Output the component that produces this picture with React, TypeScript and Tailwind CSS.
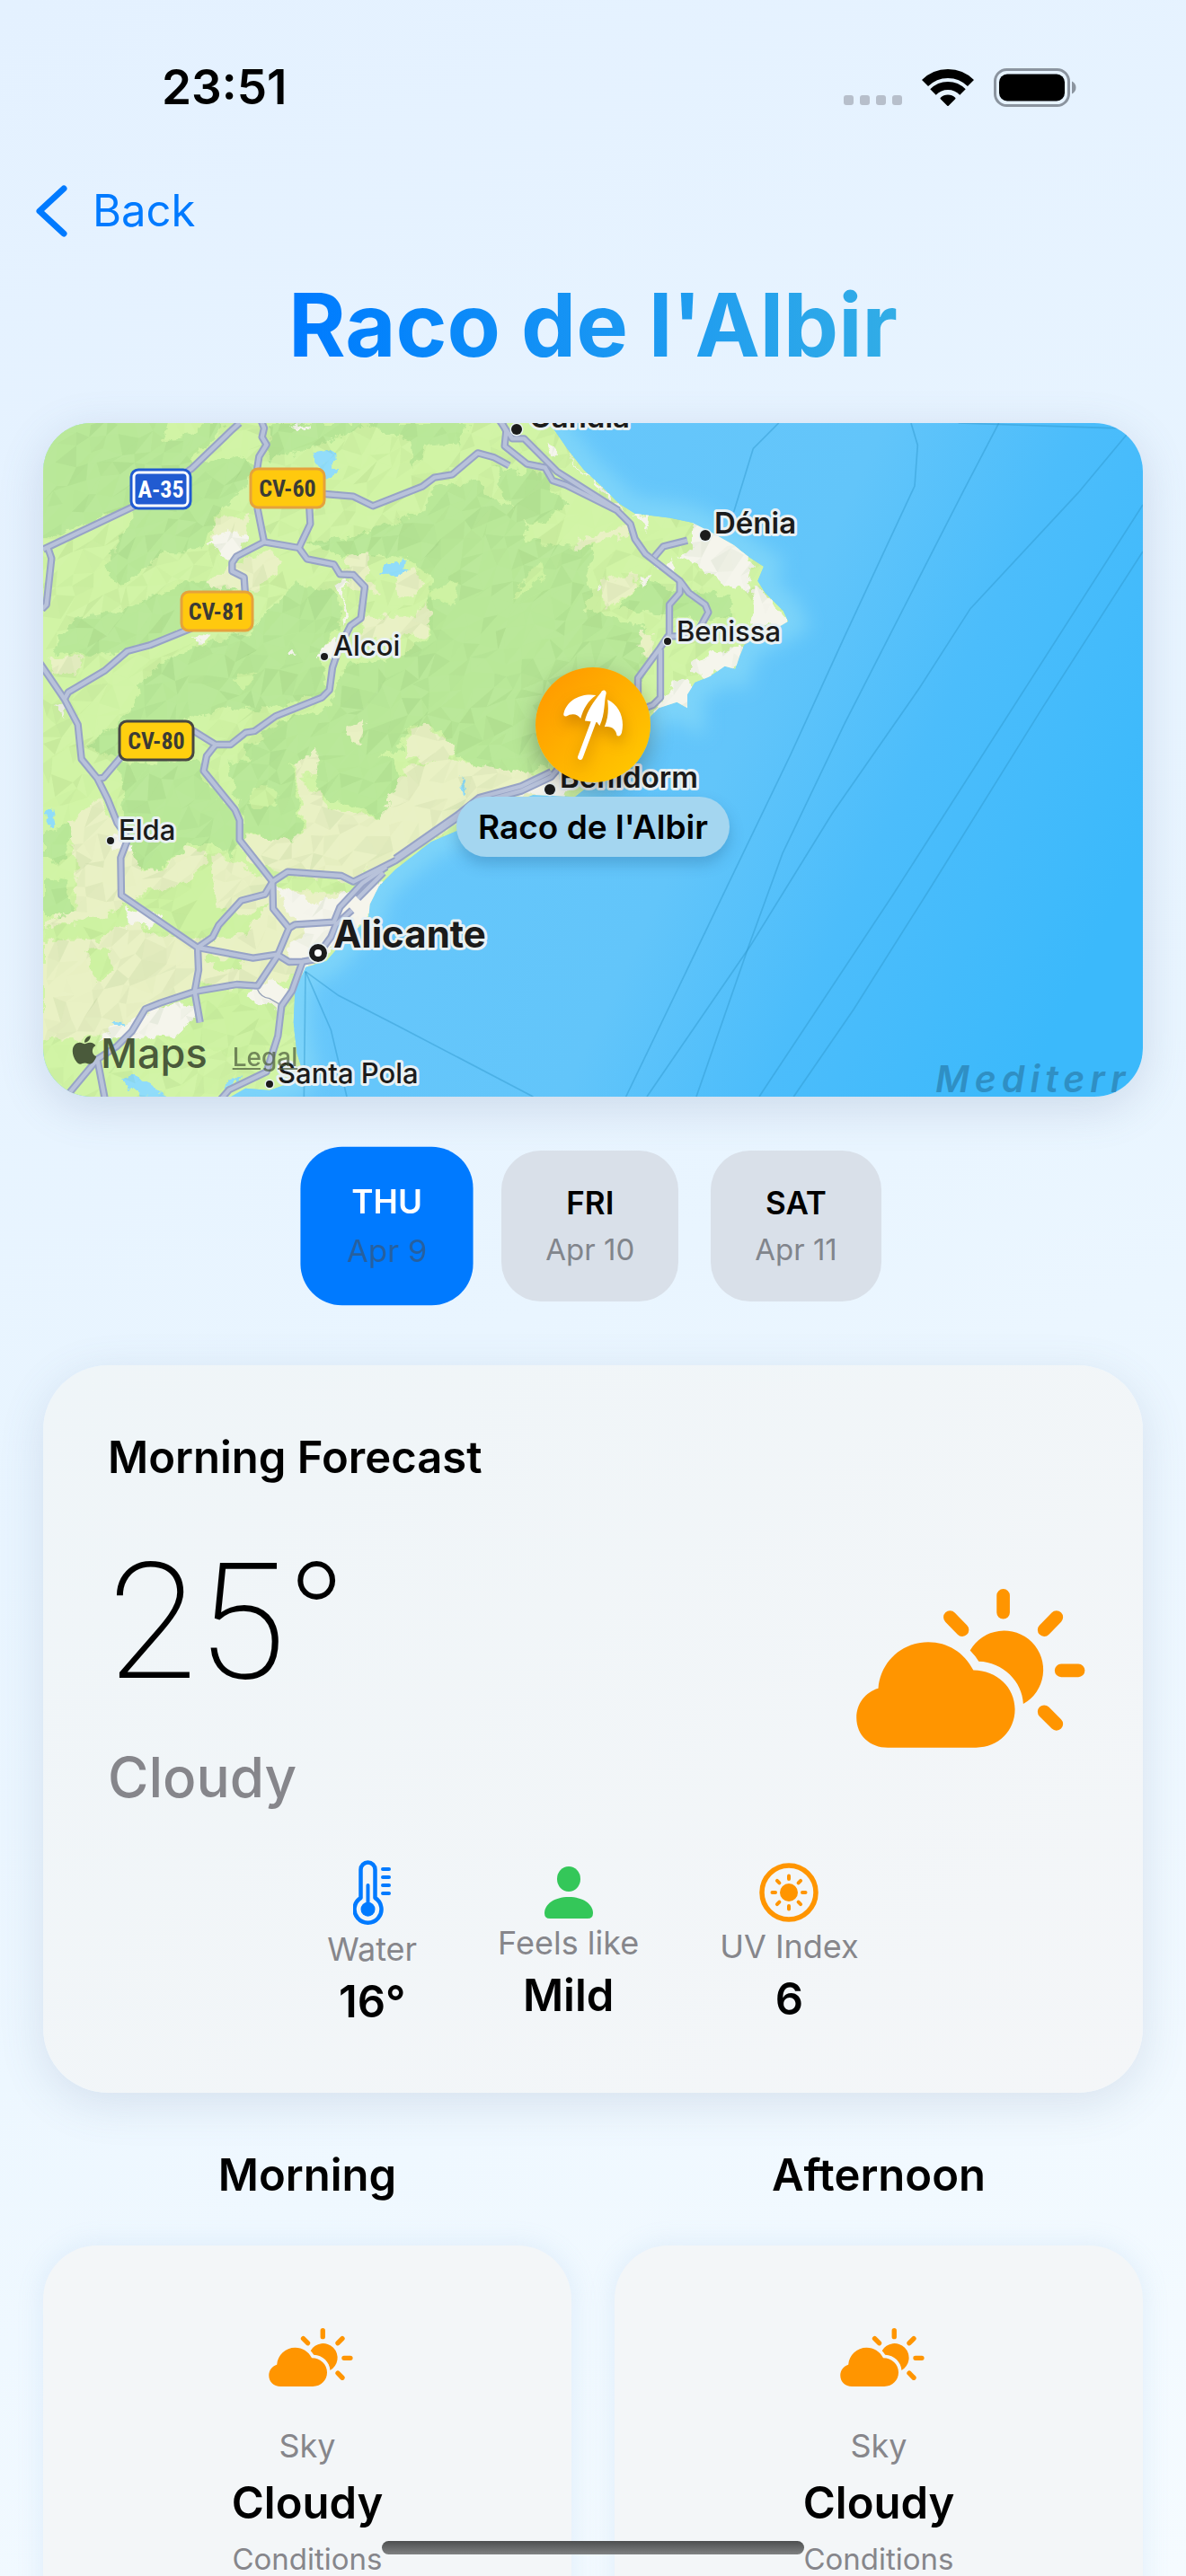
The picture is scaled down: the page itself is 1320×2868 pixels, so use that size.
import { useState } from "react";
import { FaApple } from "react-icons/fa";

const roads = [
  "24,455 330,310 520,185 650,60 680,33",
  "40,450 52,485 35,640 20,655",
  "750,20 762,50 755,80 770,105 745,145 738,190 740,320 762,430",
  "900,268 965,270 1060,278 1125,310 1290,245 1330,215 1390,205 1475,133 1530,148 1580,175",
  "912,300 916,370 878,450",
  "762,430 878,450 905,487 995,505 1015,538 1060,540 1098,580 1085,685 1050,710 1010,790 990,850 980,925 955,950 800,1012 730,1062 700,1067 650,1107 600,1107 500,1045",
  "762,430 670,478 655,500 655,528 695,548 700,620",
  "520,718 380,775 305,795 230,860 108,932 95,955",
  "10,830 95,955 140,1040 152,1155 205,1220 240,1290 272,1370 308,1420 283,1485 285,1610 540,1785",
  "300,1130 225,1218 205,1220",
  "600,1107 570,1145 560,1195 665,1325 680,1360 680,1425 790,1565",
  "790,1565 840,1532 1020,1545 1060,1565 1150,1520 1200,1495 1410,1350 1480,1300 1620,1262 1720,1215 1750,1180",
  "1200,1487 1410,1340 1480,1284 1620,1246 1720,1198",
  "790,1565 765,1607 685,1628 610,1710 590,1750 540,1785",
  "540,1785 725,1820 805,1808 845,1833 890,1832 930,1825 985,1750 1005,1700",
  "790,1565 792,1655 845,1720 805,1815 740,1913 670,1908 530,1932 415,1970 365,1990 320,2065 270,2115 205,2158 95,2290",
  "845,1720 865,1708 995,1700 1015,1650 1090,1570 1170,1515",
  "1075,1620 1160,1535",
  "1055,1660 1000,1710",
  "540,1785 543,1860 530,1932 548,2035",
  "205,2158 232,2300",
  "890,1832 855,1930 820,1980 808,2080 770,2200 645,2260 610,2300",
  "1550,20 1570,60 1565,110 1640,170 1700,182 1725,225 1770,240 1940,325 1985,370 2000,420 2035,470 2150,560 2180,600 2235,640 2245,665 2215,720 2180,745 2110,745 2080,790 2010,885 2010,960",
  "1545,20 1590,85 1630,85 1740,195 1945,325",
  "2175,425 2095,445 2065,480",
  "2150,560 2150,600 2115,640 2115,740",
  "2085,790 2085,950 2060,975 1980,1005",
];

const forests = [
  "0,0 450,0 420,100 470,90 560,33 640,33 500,180 330,300 120,390 0,440",
  "560,160 690,140 730,180 700,240 640,310 600,340 575,400 560,460 440,460 380,500 280,570 230,520 290,400 330,330 430,290",
  "130,690 340,640 520,560 680,560 640,620 500,720 320,790 180,810 60,800 80,740",
  "780,33 1100,33 960,100 780,160",
  "1100,33 1440,33 1420,100 1300,110 1260,190 1250,90",
  "860,570 1000,590 1020,700 940,800 980,930 780,990 640,980 500,1020 420,1080 240,1150 180,1110 330,980 350,900 400,850 560,770 700,740",
  "900,430 1060,410 1300,330 1330,240 1480,230 1500,270 1620,340 1640,420 1790,450 1860,440 1840,540 1850,620 1830,650 2040,720 2060,800 2020,900 1960,1160 1780,1120 1700,1180 1560,1230 1500,1190 1390,1140 1360,1060 1250,1040 1220,1120 1000,1190 880,1170 720,1160 700,1120 820,1030 980,985 1010,900 1040,830 1180,830 1320,740 1300,640 1330,560 1240,480 1000,470",
  "1540,190 1700,200 1720,260 1780,300 1700,360 1640,370 1560,290",
  "1940,650 2040,550 2110,590 2230,600 2320,610 2330,680 2200,690",
  "270,1170 540,1160 560,1220 660,1330 700,1410 660,1480 580,1440 510,1440 410,1530 340,1520 280,1400 300,1280",
  "640,1160 850,1160 870,1280 890,1400 850,1440 690,1400 680,1330",
  "930,1140 1190,1150 1230,1250 1150,1350 1060,1310 940,1270",
  "1230,1260 1330,1270 1330,1380 1280,1350",
  "1340,1180 1600,1160 1600,1190 1420,1220",
  "1255,1280 1390,1260 1400,1340 1330,1390 1260,1330",
  "24,1400 130,1370 80,1510 24,1480",
  "24,1545 90,1560 130,1680 24,1680",
  "30,1990 180,1920 180,2050 24,2055",
];

const drylands = [
  "580,380 610,345 715,350 700,410 600,420",
  "660,500 780,460 830,500 740,590 600,590 570,560",
  "1030,480 1110,465 1110,560 1150,600 1050,580",
  "1200,530 1260,520 1290,560 1260,620 1210,600",
  "1100,680 1260,680 1290,640 1320,660 1310,740 1140,760 1060,790",
  "40,815 160,815 130,870 60,870",
  "1820,420 1980,375 1990,400 1880,430 1800,450",
  "1890,560 2000,535 2000,590 1900,650",
  "2020,730 2070,730 2050,820 2010,790",
  "1040,1050 1110,1010 1080,1110 1050,1100",
  "860,1170 940,1130 940,1200 880,1210 1000,1330 1150,1350 1240,1180 1400,1160 1700,1210 1700,1280 1400,1380 1180,1500 1050,1560 840,1540 700,1500 690,1410 850,1430 900,1400",
  "110,1370 200,1290 290,1390 350,1530 430,1520 500,1450 650,1490 780,1560 880,1600 1050,1600 1060,1720 900,1870 780,1900 640,1920 500,1960 360,2000 300,2070 24,2100 24,1700 130,1660 140,1560",
  "1250,1060 1290,1040 1400,1110 1380,1180 1230,1150",
];

const meadows = [
  "360,1600 520,1560 580,1450 600,1640 700,1680 780,1640 700,1740 560,1760 420,1740 300,1700 200,1760 24,1760 24,1720 240,1680",
  "560,1820 700,1830 650,1860 600,1850",
  "710,1280 750,1240 810,1260 800,1310 720,1320",
  "420,1980 560,1900 840,1990 870,2060 700,2160 400,2090",
  "970,1570 1080,1560 1060,1610 1000,1600",
  "1590,620 1680,490 1690,550 1590,620",
  "650,880 740,860 700,920",
  "1310,600 1420,560 1400,640 1320,620",
  "200,1900 260,1860 240,1780 160,1800",
];

const towns = [
  "580,430 640,395 700,410 680,470 640,500 620,460",
  "850,42 920,38 880,55",
  "1010,570 1050,560 1020,620 1050,680 1030,710",
  "960,770 1000,750 1000,810 930,810",
  "840,800 860,780 870,800 850,812",
  "520,735 580,745 560,765",
  "60,975 110,965 100,1010",
  "300,1650 430,1680 380,1715 310,1710",
  "810,1570 860,1600 920,1640 1050,1600 1150,1560 1110,1690 1000,1780 880,1860 840,1800 900,1720 830,1660",
  "360,2000 500,1960 550,2010 460,2080 320,2090 200,2090",
  "700,1950 770,1890 850,1930 810,2000",
  "240,1430 300,1400 320,1460 260,1460",
  "2000,335 2050,340 2040,400",
  "2190,360 2350,440 2400,500 2380,590 2300,570 2150,480 2190,440",
  "2070,520 2130,480 2150,540",
  "2380,700 2400,570 2460,640 2510,700 2400,720",
  "2190,830 2330,780 2370,780 2340,850 2240,890 2190,860",
  "2130,910 2180,880 2200,920 2170,990 2060,1000",
  "1710,100 1750,125 1720,140",
  "1760,130 1960,320 1940,320",
  "1600,1270 1700,1210 1800,1240 1760,1290",
  "2005,550 2060,540 2020,590",
  "1870,570 1890,570 1880,595",
];

const ferries = [
  "2922,33 2944,107 2934,243 2700,746 2520,1140 1970,2283",
  "3215,33 3100,254 2700,1037 2493,1470 2380,1780 2205,2283",
  "3080,33 3590,50 3660,50 3480,266 3120,653 2950,918 2660,1335 2385,1780 2040,2283",
  "3696,306 2860,1611 2460,2215 2415,2283",
  "3696,462 3360,985 2980,1596 2730,1992 2530,2283",
  "2480,33 2395,118 2330,330",
  "900,1865 895,2283",
  "900,1865 985,2060 1038,2283",
  "900,1865 1010,1945 1200,2042 1660,2283",
];

const coast =
  "M0,0 H1700 L1715,33 1775,120 1830,190 1890,245 1945,300 2000,335 2120,350 2190,365 2250,395 2330,440 2380,480 2430,512 2410,560 2435,600 2470,635 2495,660 2512,695 2470,720 2400,750 2365,775 2350,810 2335,855 2300,845 2250,880 2200,900 2175,940 2175,985 2140,965 2080,985 2055,1010 2000,1080 1940,1170 1840,1250 1800,1282 1660,1275 1560,1310 1430,1385 1320,1432 1200,1525 1145,1580 1115,1640 1110,1690 1040,1750 970,1830 900,1850 865,1930 860,2040 872,2140 885,2180 870,2230 780,2262 700,2255 640,2290 V2400 H0 Z";

// low-poly hillshade: a jittered grid split into triangles of varying tone
const noise = (a: number, b: number) => {
  const n = Math.sin(a * 127.1 + b * 311.7) * 43758.5453;
  return n - Math.floor(n);
};

const CELL = 50;
const COLS = 51;
const ROWS = 47;

const vertex = (col: number, row: number) =>
  `${Math.round((col + noise(col, row) * 0.9) * CELL)},${Math.round((row + noise(row + 50, col) * 0.9) * CELL)}`;

const facets = Array.from({ length: COLS * ROWS }, (_, i) => {
  const col = i % COLS;
  const row = Math.floor(i / COLS);
  return [
    { points: `${vertex(col, row)} ${vertex(col + 1, row)} ${vertex(col, row + 1)}`, tone: noise(col + 9, row + 3) },
    { points: `${vertex(col + 1, row)} ${vertex(col + 1, row + 1)} ${vertex(col, row + 1)}`, tone: noise(col + 31, row + 77) },
  ];
}).flat();

interface CityProps {
  name: string;
  x: number;
  y: number;
  dot: [number, number, number];
  className: string;
}

const cities: CityProps[] = [
  { name: "Gandia", x: 549, y: 16, dot: [535, 18, 6], className: "text-[33px] font-semibold" },
  { name: "Dénia", x: 755, y: 134, dot: [745, 136, 6], className: "text-[33px] font-semibold" },
  { name: "Benissa", x: 713, y: 254, dot: [703, 254, 4], className: "text-[31px] font-medium" },
  { name: "Alcoi", x: 331, y: 270, dot: [321, 271, 4], className: "text-[31px] font-medium" },
  { name: "Benidorm", x: 583, y: 417, dot: [572, 419, 6], className: "text-[33px] font-semibold" },
  { name: "Elda", x: 92, y: 475, dot: [83, 476, 4], className: "text-[31px] font-medium" },
  { name: "Santa Pola", x: 269, y: 746, dot: [260, 747, 4], className: "text-[31px] font-medium" },
];

interface ShieldProps {
  name: string;
  x: number;
  y: number;
  width: number;
  fill: string;
  stroke: string;
  color: string;
}

const shields: ShieldProps[] = [
  { name: "A-35", x: 106, y: 63, width: 66, fill: "#215bd1", stroke: "#215bd1", color: "#ffffff" },
  { name: "CV-60", x: 239, y: 62, width: 82, fill: "#ffc90e", stroke: "#e5a23c", color: "#3b3b35" },
  { name: "CV-81", x: 162, y: 199, width: 79, fill: "#ffc90e", stroke: "#e5a23c", color: "#3b3b35" },
  { name: "CV-80", x: 93, y: 343, width: 82, fill: "#ffcf0f", stroke: "#474742", color: "#3b3b35" },
];

const Areas = ({ shapes, fill }: { shapes: string[]; fill: string }) => (
  <g fill={fill}>
    {shapes.map((points) => (
      <polygon key={points} points={points} />
    ))}
  </g>
);

const CoastMap = () => {
  return (
    <svg
      viewBox="8 11 1224 750"
      preserveAspectRatio="xMidYMid slice"
      className="block h-full w-full"
      role="img"
      aria-label="Map of the Costa Blanca"
    >
      <defs>
        <linearGradient id="sea" x1="0" y1="0.3" x2="1" y2="0.6">
          <stop offset="0.3" stopColor="#68c7fb" />
          <stop offset="0.62" stopColor="#62c5fa" />
          <stop offset="0.78" stopColor="#4cbdfb" />
          <stop offset="1" stopColor="#3bb9fb" />
        </linearGradient>
        <clipPath id="land">
          <path d={coast} />
        </clipPath>
        <filter id="glow" x="-10%" y="-10%" width="120%" height="120%">
          <feGaussianBlur stdDeviation="30" />
        </filter>
        <filter id="rough" x="0" y="0" width="100%" height="100%">
          <feTurbulence type="fractalNoise" baseFrequency="0.025" numOctaves="4" seed="4" />
          <feDisplacementMap in="SourceGraphic" scale="50" xChannelSelector="R" yChannelSelector="G" />
        </filter>
      </defs>

      <rect x="0" y="0" width="1240" height="780" fill="url(#sea)" />
      <g transform="scale(0.333333)">
        <path d={coast} fill="none" stroke="#86dafa" strokeOpacity="0.7" strokeWidth="110" filter="url(#glow)" />
        <g fill="none" stroke="#2f97cc" strokeOpacity="0.45" strokeWidth="5">
          {ferries.map((points) => (
            <polyline key={points} points={points} />
          ))}
        </g>
        <g clipPath="url(#land)">
          <path d={coast} fill="#d1f4a5" />
          <g filter="url(#rough)">
            <Areas shapes={forests} fill="#b9e898" />
            <Areas shapes={drylands} fill="#e9f1c4" />
            <Areas shapes={meadows} fill="#cdf2a1" />
            <Areas shapes={towns} fill="#f5f5ec" />
            <g fill="#8fdcfa">
              <path d="M935,135 l40,-8 30,20 -20,20 20,20 20,0 -15,10 -25,20 -20,-5 -10,-40 -20,-15Z" />
              <path d="M1140,545 l30,-40 40,5 10,-30 18,10 -5,35 -35,15Z" />
              <path d="M35,1330 l20,-5 10,40 -15,20 -15,-20Z M250,2040 l20,-15 20,15 -10,8Z M285,2230 l60,-20 40,30 50,45 -80,0Z M1412,1220 l12,0 8,50 -14,10Z M640,2230 l45,-15 -10,20 -50,20Z" />
            </g>
          </g>
          {facets.map(({ points, tone }) => (
            <polygon
              key={points}
              points={points}
              fill={tone > 0.6 ? "#4f7a3c" : "#ffffff"}
              fillOpacity={tone > 0.6 ? (tone - 0.6) * 0.2 : tone * 0.05}
            />
          ))}
        </g>
        <path d="M740,1925 Q750,1950 780,1955 L815,1975" fill="none" stroke="#97a3b8" strokeWidth="4" />
        <g fill="none" stroke="#97a3c6" strokeWidth="25" strokeLinejoin="round">
          {roads.map((points) => (
            <polyline key={points} points={points} />
          ))}
        </g>
        <g fill="none" stroke="#b8c2da" strokeWidth="13" strokeLinejoin="round">
          {roads.map((points) => (
            <polyline key={points} points={points} />
          ))}
        </g>
      </g>

      {shields.map(({ name, x, y, width, fill, stroke, color }) => (
        <g key={name}>
          <rect x={x} y={y} width={width} height="43" rx="8" fill={fill} stroke={stroke} strokeWidth="3" />
          {name === "A-35" && (
            <rect x={x + 3} y={y + 3} width={width - 6} height="37" rx="5" fill="none" stroke="#ffffff" strokeWidth="3" />
          )}
          <text
            x={x + width / 2}
            y={y + 31}
            textAnchor="middle"
            fill={color}
            className="font-['Liberation_Sans_Narrow','Roboto_Condensed','Roboto',sans-serif] text-[26px] font-bold"
          >
            {name}
          </text>
        </g>
      ))}

      <g stroke="#e9f1f3" strokeWidth="6" strokeLinejoin="round" className="[paint-order:stroke]" fill="#1b1b1b">
        {cities.map(({ name, x, y, dot, className }) => (
          <g key={name}>
            <circle cx={dot[0]} cy={dot[1]} r={dot[2]} strokeWidth="3" />
            <text x={x} y={y} className={className}>
              {name}
            </text>
          </g>
        ))}
        <circle cx="314" cy="601" r="10" strokeWidth="3" />
        <circle cx="314" cy="601" r="4" fill="#ffffff" stroke="none" />
        <text x="331" y="595" className="text-[42px] font-bold">
          Alicante
        </text>
      </g>
      <text x="1001" y="756" fill="#2f8fc4" className="text-[41px] font-semibold italic tracking-[6px]">
        Mediterr
      </text>
    </svg>
  );
};

const Umbrella = () => (
  <svg
    viewBox="560 922 202 236"
    className="h-20 w-17 drop-shadow-[0_8px_8px_rgba(120,60,0,0.35)]"
    fill="#ffffff"
    aria-hidden="true"
  >
    <path d="M564,1003 C574,958 622,934 671,942 C644,961 630,986 620,1019 C610,1002 589,1001 572,1012 Q562,1013 564,1003Z" />
    <path d="M687,934 Q690,924 699,926 Q707,930 704,939 C697,962 702,1003 683,1043 Q678,1039 675,1032 L634,1027 C643,992 660,967 687,934Z" />
    <path d="M709,957 C748,975 767,1020 756,1066 Q752,1080 740,1076 C737,1055 722,1043 699,1047 C712,1016 713,987 709,957Z" />
    <path d="M665,1024 L619,1147" fill="none" stroke="#ffffff" strokeWidth="17" strokeLinecap="round" />
  </svg>
);

const CloudSun = ({ className }: { className: string }) => (
  <svg viewBox="160 140 765 532" className={className} fill="#ff9500" aria-hidden="true">
    <path d="M233,473 C240,385 310,318 400,318 C465,318 520,352 551,412 C630,412 690,470 690,543 C690,615 635,671 560,671 L265,671 C205,671 160,630 160,571 C160,525 190,485 233,473Z" />
    <path d="M540,346 A131,131 0 1 1 718,525 C715,450 650,385 569,383 Q558,364 540,346Z" />
    <path
      d="M651,162V219 M473,235L514,277 M829,235L788,277 M845,413H902 M788,551L829,592"
      stroke="#ff9500"
      strokeWidth="44"
      strokeLinecap="round"
    />
  </svg>
);

const Thermometer = () => (
  <svg viewBox="0 0 42 72" className="h-[72px] w-[42px]" fill="none" stroke="#007aff" strokeLinecap="round" aria-hidden="true">
    <path d="M8.5,10.5 a8,8 0 0 1 16,0 V42 A15,15 0 1 1 8.5,42 Z" strokeWidth="4.5" strokeLinejoin="round" />
    <path d="M16.5,28V54" strokeWidth="4" />
    <circle cx="16.5" cy="54.7" r="8" fill="#007aff" stroke="none" />
    <path d="M33,10H40 M33,19H40 M33,28H40 M33,37H40" strokeWidth="4" />
  </svg>
);

const Person = () => (
  <svg viewBox="0 0 54 58" className="h-[58px] w-[54px]" fill="#34c759" aria-hidden="true">
    <ellipse cx="27" cy="14" rx="13" ry="14" />
    <path d="M0,52 C0,42 11,34 27,34 C43,34 54,42 54,52 Q54,58 48,58 H6 Q0,58 0,52Z" />
  </svg>
);

const UvIndex = () => (
  <svg viewBox="-33 -33 66 66" className="size-[66px]" fill="none" stroke="#ff9500" aria-hidden="true">
    <circle r="30" strokeWidth="5.5" />
    <circle r="10" fill="#ff9500" stroke="none" />
    {[0, 45, 90, 135, 180, 225, 270, 315].map((angle) => (
      <path key={angle} d="M0,-15V-18.5" strokeWidth="4" strokeLinecap="round" transform={`rotate(${angle})`} />
    ))}
  </svg>
);

const StatusBar = () => (
  <div className="flex h-[195px] items-center justify-between pr-[120px] pl-[180px]">
    <p className="text-[53px] leading-none font-semibold">23:51</p>
    <div className="flex items-end gap-[22px]">
      <div className="flex gap-[7px] pb-0.5">
        {[1, 2, 3, 4].map((bar) => (
          <span key={bar} className="size-[11px] rounded-[3px] bg-[#b7bfcb]" />
        ))}
      </div>
      <svg viewBox="0 0 58 43" className="h-[43px] w-[58px]" fill="none" stroke="#000000" aria-hidden="true">
        <path d="M3.5,16.5 A36,36 0 0 1 54.5,16.5" strokeWidth="10" />
        <path d="M12.5,26.5 A23,23 0 0 1 45.5,26.5" strokeWidth="9" />
        <path d="M29,41 L21.5,33.5 A11,11 0 0 1 36.5,33.5Z" fill="#000000" strokeWidth="2" strokeLinejoin="round" />
      </svg>
      <svg viewBox="0 0 94 43" className="h-[43px] w-[94px]" aria-hidden="true">
        <rect x="1.5" y="1.5" width="82" height="40" rx="13" fill="none" stroke="#8b949f" strokeWidth="3" />
        <rect x="6" y="6.5" width="73" height="30" rx="9" fill="#000000" />
        <path d="M87,14.5 C93,17 93,26 87,28.5Z" fill="#8b949f" />
      </svg>
    </div>
  </div>
);

const days = [
  { day: "THU", date: "Apr 9" },
  { day: "FRI", date: "Apr 10" },
  { day: "SAT", date: "Apr 11" },
];

const metrics = [
  { label: "Water", value: "16°", icon: <Thermometer /> },
  { label: "Feels like", value: "Mild", icon: <Person /> },
  { label: "UV Index", value: "6", icon: <UvIndex /> },
];

const PeriodColumn = ({ title, sky }: { title: string; sky: string }) => (
  <section className="flex flex-col gap-12">
    <h2 className="text-center text-[49px] leading-[60px] font-semibold">{title}</h2>
    <div className="flex flex-col items-center rounded-[60px] bg-[#f3f6f8] pt-[92px] pb-18 shadow-[0_0_30px_rgba(120,170,215,0.16)]">
      <CloudSun className="ml-2 h-[65px] w-[94px]" />
      <p className="mt-[42px] text-[36px] leading-[48px] text-[#86868b]">Sky</p>
      <p className="mt-2 text-[49px] leading-[64px] font-semibold">{sky}</p>
      <p className="mt-1.5 text-[33px] leading-[48px] text-[#86868b]">Conditions</p>
    </div>
  </section>
);

const App = () => {
  const [selected, setSelected] = useState("THU");

  return (
    <div className="relative h-screen overflow-hidden bg-[linear-gradient(155deg,#e4f1ff_0%,#e9f5ff_50%,#f5fbff_100%)] font-['Inter',sans-serif] text-black">
      <StatusBar />
      <nav className="flex h-[79px] items-center px-10">
        <button type="button" className="flex items-center gap-7 text-[49px] leading-none text-[#007aff]">
          <svg viewBox="0 0 35 58" className="h-[58px] w-[35px]" fill="none" aria-hidden="true">
            <path d="M31,4 L4,29 L31,54" stroke="#007aff" strokeWidth="7" strokeLinecap="round" strokeLinejoin="round" />
          </svg>
          Back
        </button>
      </nav>
      <h1 className="mt-7 mb-[49px] text-center text-[97px] leading-[120px] font-bold">
        <span className="bg-linear-to-r from-[#007aff] to-[#32ade6] bg-clip-text text-transparent">Raco de l'Albir</span>
      </h1>

      <main className="px-12">
        <div className="relative h-[750px] overflow-hidden rounded-[54px] shadow-[0_12px_50px_rgba(90,110,150,0.2)]">
          <CoastMap />
          <div className="absolute inset-0 flex flex-col items-center justify-center gap-4 pt-1">
            <div className="flex size-32 items-center justify-center rounded-full bg-linear-to-br from-[#ff9500] to-[#ffcc00] shadow-[0_10px_26px_rgba(0,0,0,0.3)]">
              <Umbrella />
            </div>
            <p className="rounded-full bg-[#a4d6f0] px-6 text-[37px] leading-[67px] font-semibold shadow-[0_8px_16px_rgba(20,70,120,0.25)]">
              Raco de l'Albir
            </p>
          </div>
          <div className="absolute bottom-3 left-7 flex items-baseline gap-7 text-[#4a5a3b]">
            <p className="flex items-center text-[45px] leading-[64px] font-medium">
              <FaApple className="mb-2 size-9" aria-hidden="true" />
              Maps
            </p>
            <a href="#legal" className="text-[28px] leading-[64px] font-medium underline opacity-70">
              Legal
            </a>
          </div>
        </div>

        <div className="mt-15 flex justify-center gap-9">
          {days.map(({ day, date }) => (
            <button
              key={day}
              type="button"
              aria-pressed={day === selected}
              onClick={() => setSelected(day)}
              className={
                day === selected
                  ? "scale-105 rounded-[44px] bg-[#007aff] px-[49px] py-8 text-white"
                  : "rounded-[44px] bg-[#d9e0e9] px-[49px] py-8"
              }
            >
              <span className="block text-[35px] leading-[52px] font-semibold">{day}</span>
              <span
                className={
                  day === selected
                    ? "block text-[33px] leading-[52px] text-[#26609f]"
                    : "block text-[33px] leading-[52px] text-[#81858c]"
                }
              >
                {date}
              </span>
            </button>
          ))}
        </div>

        <section className="mt-[71px] rounded-[72px] bg-linear-to-br from-[#eff5f8] to-[#f4f6f8] px-18 pt-18 pb-[69px] shadow-[0_12px_50px_rgba(90,110,150,0.16)]">
          <h2 className="text-[49px] leading-[62px] font-semibold">Morning Forecast</h2>
          <div className="mt-[43px] flex items-center justify-between">
            <div>
              <p className="font-['Roboto',sans-serif] text-[180px] leading-[220px] font-extralight">25°</p>
              <p className="mt-6 text-[62px] leading-[76px] font-medium text-[#86868b]">Cloudy</p>
            </div>
            <CloudSun className="-mr-2 h-[177px] w-[255px]" />
          </div>
          <div className="mt-[54px] flex items-center justify-center gap-[90px]">
            {metrics.map(({ label, value, icon }) => (
              <div key={label} className="flex flex-col items-center gap-[3px]">
                {icon}
                <p className="text-[36px] leading-[48px] text-[#86868b]">{label}</p>
                <p className="text-[49px] leading-[64px] font-semibold">{value}</p>
              </div>
            ))}
          </div>
        </section>

        <div className="mt-[62px] grid grid-cols-2 gap-12">
          <PeriodColumn title="Morning" sky="Cloudy" />
          <PeriodColumn title="Afternoon" sky="Cloudy" />
        </div>
      </main>

      <div className="absolute inset-x-0 bottom-6 flex justify-center">
        <div className="h-[15px] w-[470px] rounded-full bg-linear-to-b from-[#4d4f50] to-[#808283]" />
      </div>
    </div>
  );
};

export default App;
